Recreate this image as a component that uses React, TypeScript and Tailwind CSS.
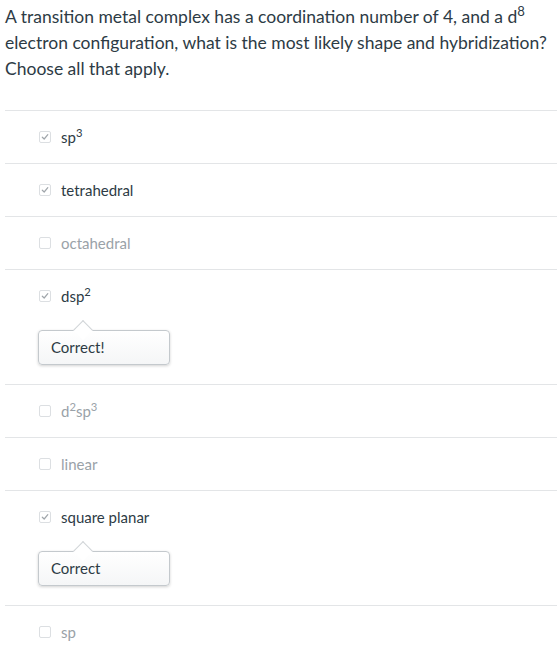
import React from "react";

type Opt = { label: React.ReactNode; checked: boolean; feedback?: string };

const opts: Opt[] = [
  { label: <>sp<sup>3</sup></>, checked: true },
  { label: "tetrahedral", checked: true },
  { label: "octahedral", checked: false },
  { label: <>dsp<sup>2</sup></>, checked: true, feedback: "Correct!" },
  { label: <>d<sup>2</sup>sp<sup>3</sup></>, checked: false },
  { label: "linear", checked: false },
  { label: "square planar", checked: true, feedback: "Correct" },
  { label: "sp", checked: false },
];

function Box({ checked }: { checked: boolean }) {
  return (
    <span className="flex h-[12px] w-[12px] items-center justify-center rounded-[2px] border border-[#dcdfe2] bg-white">
      {checked && (
        <svg width="8" height="8" viewBox="0 0 8 8" fill="none">
          <path d="M1.3 4.2 L3.2 6 L6.8 1.6" stroke="#a0a6ab" strokeWidth="1.2" strokeLinecap="round" strokeLinejoin="round" />
        </svg>
      )}
    </span>
  );
}

export default function App() {
  return (
    <div className="bg-white text-[#2d3b45]" style={{ fontFamily: "Lato, 'Open Sans', sans-serif" }}>
      <div className="pl-[5px] pr-[4px] pt-[4px] text-[17.5px] leading-[26px]">
        A transition metal complex has a coordination number of 4, and a d<sup>8</sup> electron configuration, what is the most likely shape and hybridization? Choose all that apply.
      </div>
      <div className="mt-[28px] ml-[5px]">
        {opts.map((o, i) => (
          <div key={i} className="border-t border-[#e3e5e7] pt-[16px] pb-[16px]">
            <div className={`flex h-[20px] items-center pl-[34px] text-[15px] ${o.checked ? "text-[#2d3b45]" : "text-[#9aa2a8]"}`}>
              <Box checked={o.checked} />
              <span className="ml-[10px]">{o.label}</span>
            </div>
            {o.feedback && (
              <div className="relative ml-[33px] mt-[24px] mb-[3px] flex h-[35px] w-[132px] items-center rounded-[4px] border border-[#c4c9cd] bg-gradient-to-b from-white to-[#f5f6f7] pl-[12px] text-[15px] text-[#2d3b45] shadow-[0_1px_3px_rgba(0,0,0,0.18)]">
                <span className="absolute left-[37px] top-[-8px] h-[14px] w-[14px] rotate-45 border-l border-t border-[#d0d4d7] bg-white" />
                <span className="relative">{o.feedback}</span>
              </div>
            )}
          </div>
        ))}
      </div>
    </div>
  );
}
